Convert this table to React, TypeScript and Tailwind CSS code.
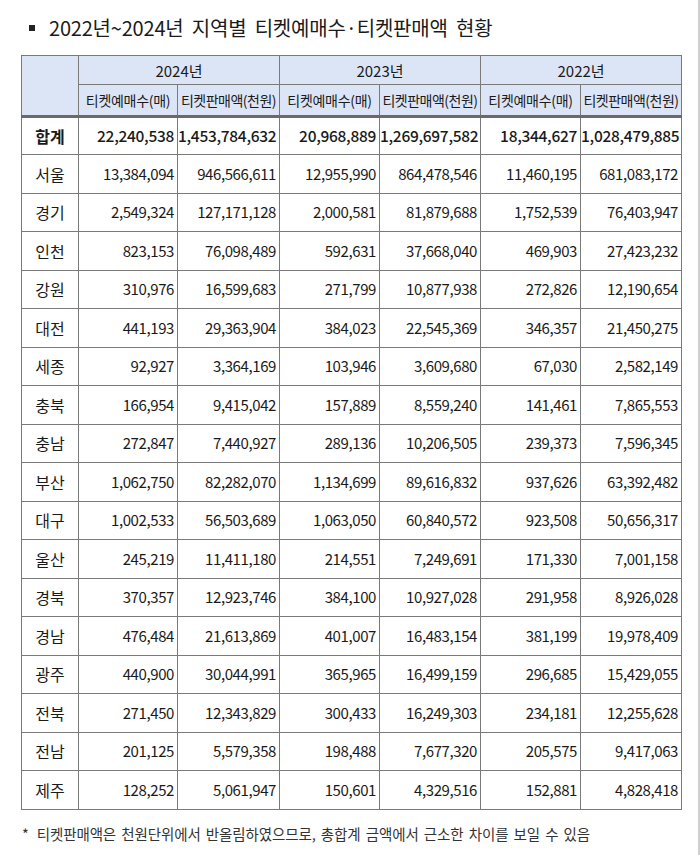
const rows: [string, string, string, string, string, string, string][] = [
	["서울", "13,384,094", "946,566,611", "12,955,990", "864,478,546", "11,460,195", "681,083,172"],
	["경기", "2,549,324", "127,171,128", "2,000,581", "81,879,688", "1,752,539", "76,403,947"],
	["인천", "823,153", "76,098,489", "592,631", "37,668,040", "469,903", "27,423,232"],
	["강원", "310,976", "16,599,683", "271,799", "10,877,938", "272,826", "12,190,654"],
	["대전", "441,193", "29,363,904", "384,023", "22,545,369", "346,357", "21,450,275"],
	["세종", "92,927", "3,364,169", "103,946", "3,609,680", "67,030", "2,582,149"],
	["충북", "166,954", "9,415,042", "157,889", "8,559,240", "141,461", "7,865,553"],
	["충남", "272,847", "7,440,927", "289,136", "10,206,505", "239,373", "7,596,345"],
	["부산", "1,062,750", "82,282,070", "1,134,699", "89,616,832", "937,626", "63,392,482"],
	["대구", "1,002,533", "56,503,689", "1,063,050", "60,840,572", "923,508", "50,656,317"],
	["울산", "245,219", "11,411,180", "214,551", "7,249,691", "171,330", "7,001,158"],
	["경북", "370,357", "12,923,746", "384,100", "10,927,028", "291,958", "8,926,028"],
	["경남", "476,484", "21,613,869", "401,007", "16,483,154", "381,199", "19,978,409"],
	["광주", "440,900", "30,044,991", "365,965", "16,499,159", "296,685", "15,429,055"],
	["전북", "271,450", "12,343,829", "300,433", "16,249,303", "234,181", "12,255,628"],
	["전남", "201,125", "5,579,358", "198,488", "7,677,320", "205,575", "9,417,063"],
	["제주", "128,252", "5,061,947", "150,601", "4,329,516", "152,881", "4,828,418"],
];

const total = ["22,240,538", "1,453,784,632", "20,968,889", "1,269,697,582", "18,344,627", "1,028,479,885"];
const years = ["2024년", "2023년", "2022년"];

export default function App() {
	return (
		<div className="w-[700px] h-[855px] bg-white border-r-2 border-[#cfcfcf] font-['Noto_Sans_CJK_KR','Noto_Sans',sans-serif] text-[#1a1a1a]">
			{/* Title */}
			<div className="h-[55px] pt-[15px] pl-[29px] flex items-start">
				<div className="flex items-center h-[26px]">
					<span className="w-[6px] h-[6px] bg-[#222] mr-[14px]" />
					<h1 className="text-[20px] leading-[26px] tracking-[-0.2px] [word-spacing:4px]">
						2022년~2024년 지역별 티켓예매수·티켓판매액 현황
					</h1>
				</div>
			</div>

			{/* Table */}
			<table className="ml-[21px] w-[660px] table-fixed border-collapse border border-[#6e6e6e]">
				<colgroup>
					<col className="w-[57px]" />
					<col className="w-[99px]" />
					<col className="w-[102px]" />
					<col className="w-[100px]" />
					<col className="w-[101px]" />
					<col className="w-[100px]" />
					<col className="w-[101px]" />
				</colgroup>
				<thead className="bg-[#dce5f6]">
					<tr className="h-[29px]">
						<th rowSpan={2} className="border border-[#7a7a7a] border-b-[3px] border-b-[#6a6a6a]" />
						{years.map((y) => (
							<th key={y} colSpan={2} className="border border-[#7a7a7a] text-[15px] font-normal leading-none">
								{y}
							</th>
						))}
					</tr>
					<tr className="h-[32px]">
						{years.map((y) => (
							<>
								<th key={y + "a"} className="border border-[#7a7a7a] border-b-[3px] border-b-[#6a6a6a] text-[14px] font-normal leading-none px-0 tracking-[-0.3px]">
									티켓예매수(매)
								</th>
								<th key={y + "b"} className="border border-[#7a7a7a] border-b-[3px] border-b-[#6a6a6a] text-[14px] font-normal leading-none px-0 tracking-[-0.5px]">
									티켓판매액(천원)
								</th>
							</>
						))}
					</tr>
				</thead>
				<tbody>
					<tr className="h-[38px]">
						<td className="border border-[#7a7a7a] text-center text-[16px] font-bold">합계</td>
						{total.map((v, i) => (
							<td key={i} className="border border-[#7a7a7a] text-right pr-[3px] text-[15.5px] font-medium tracking-[-0.3px]">
								{v}
							</td>
						))}
					</tr>
					{rows.map(([name, ...vals]) => (
						<tr key={name} className="h-[38.5px]">
							<td className="border border-[#7a7a7a] text-center text-[16px]">{name}</td>
							{vals.map((v, i) => (
								<td key={i} className="border border-[#7a7a7a] text-right pr-[3px] text-[15px] tracking-[-0.4px]">
									{v}
								</td>
							))}
						</tr>
					))}
				</tbody>
			</table>

			{/* Footnote */}
			<p className="mt-[13px] ml-[22px] text-[14.5px] text-[#333] [word-spacing:2px] tracking-[-0.1px]">
				<span className="mr-[8px]">*</span>티켓판매액은 천원단위에서 반올림하였으므로, 총합계 금액에서 근소한 차이를 보일 수 있음
			</p>
		</div>
	);
}
